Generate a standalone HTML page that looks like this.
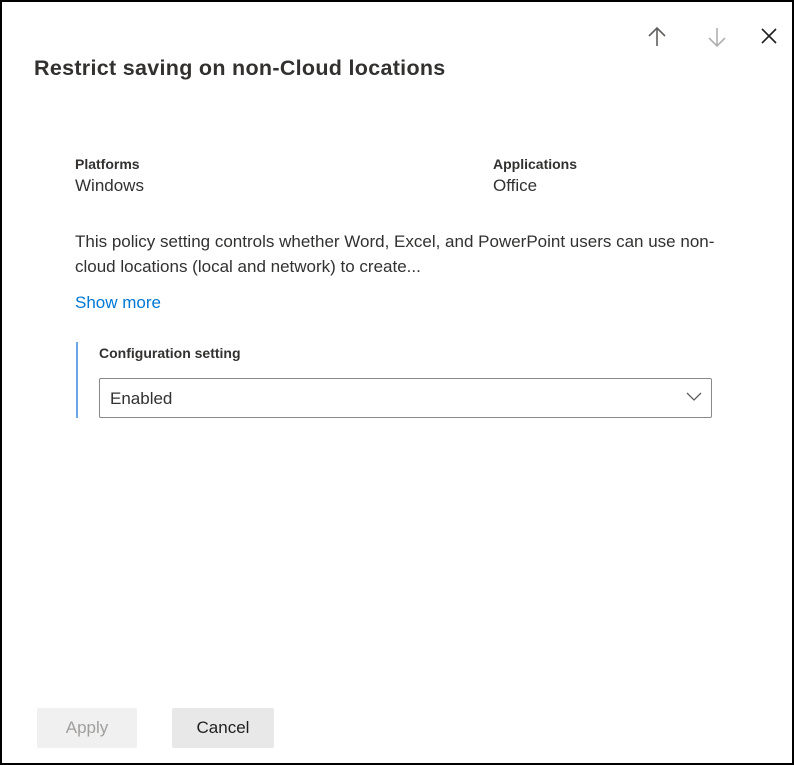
<!DOCTYPE html>
<html><head><style>
html,body{margin:0;padding:0;}
body{width:794px;height:765px;position:relative;background:#fff;font-family:"Liberation Sans",sans-serif;color:#323130;overflow:hidden;}
.frame{position:absolute;left:0;top:0;width:790px;height:761px;border:2px solid #000;}
.t{position:absolute;white-space:nowrap;}
</style></head><body>
<div class="frame"></div>
<svg style="position:absolute;left:645px;top:25px" width="24" height="24" viewBox="0 0 24 24"><path d="M12 21V3M4 11l8-8 8 8" fill="none" stroke="#605e5c" stroke-width="1.6"/></svg>
<svg style="position:absolute;left:705px;top:25px" width="24" height="24" viewBox="0 0 24 24"><path d="M12 3v18M4 13l8 8 8-8" fill="none" stroke="#b0b0b0" stroke-width="1.6"/></svg>
<svg style="position:absolute;left:760px;top:27px" width="18" height="18" viewBox="0 0 18 18"><path d="M2 2l14 14M16 2L2 16" stroke="#201f1e" stroke-width="1.6"/></svg>
<div class="t" style="left:34px;top:56px;font-size:21.5px;font-weight:bold;letter-spacing:0.3px;">Restrict saving on non-Cloud locations</div>
<div class="t" style="left:75px;top:156px;font-size:14px;font-weight:bold;">Platforms</div>
<div class="t" style="left:75px;top:176px;font-size:17px;">Windows</div>
<div class="t" style="left:493px;top:156px;font-size:14px;font-weight:bold;">Applications</div>
<div class="t" style="left:493px;top:176px;font-size:17px;">Office</div>
<div class="t" style="left:75px;top:229px;font-size:17px;line-height:25px;">This policy setting controls whether Word, Excel, and PowerPoint users can use non-<br>cloud locations (local and network) to create...</div>
<div class="t" style="left:75px;top:293px;font-size:17px;color:#0078d4;">Show more</div>
<div style="position:absolute;left:76px;top:342px;width:2px;height:76px;background:#6ca8e6;"></div>
<div class="t" style="left:99px;top:345px;font-size:14px;font-weight:bold;">Configuration setting</div>
<div style="position:absolute;left:99px;top:378px;width:611px;height:38px;border:1px solid #8a8886;border-radius:2px;"></div>
<div class="t" style="left:110px;top:389px;font-size:17px;">Enabled</div>
<svg style="position:absolute;left:686px;top:391px" width="16" height="10" viewBox="0 0 16 10"><path d="M1 2l7 7 7-7" fill="none" stroke="#605e5c" stroke-width="1.3"/></svg>
<div style="position:absolute;left:37px;top:708px;width:100px;height:40px;background:#f0f0f0;border-radius:2px;color:#a19f9d;font-size:17px;text-align:center;line-height:40px;">Apply</div>
<div style="position:absolute;left:172px;top:708px;width:102px;height:40px;background:#e8e8e8;border-radius:2px;color:#201f1e;font-size:17px;text-align:center;line-height:40px;">Cancel</div>
</body></html>
